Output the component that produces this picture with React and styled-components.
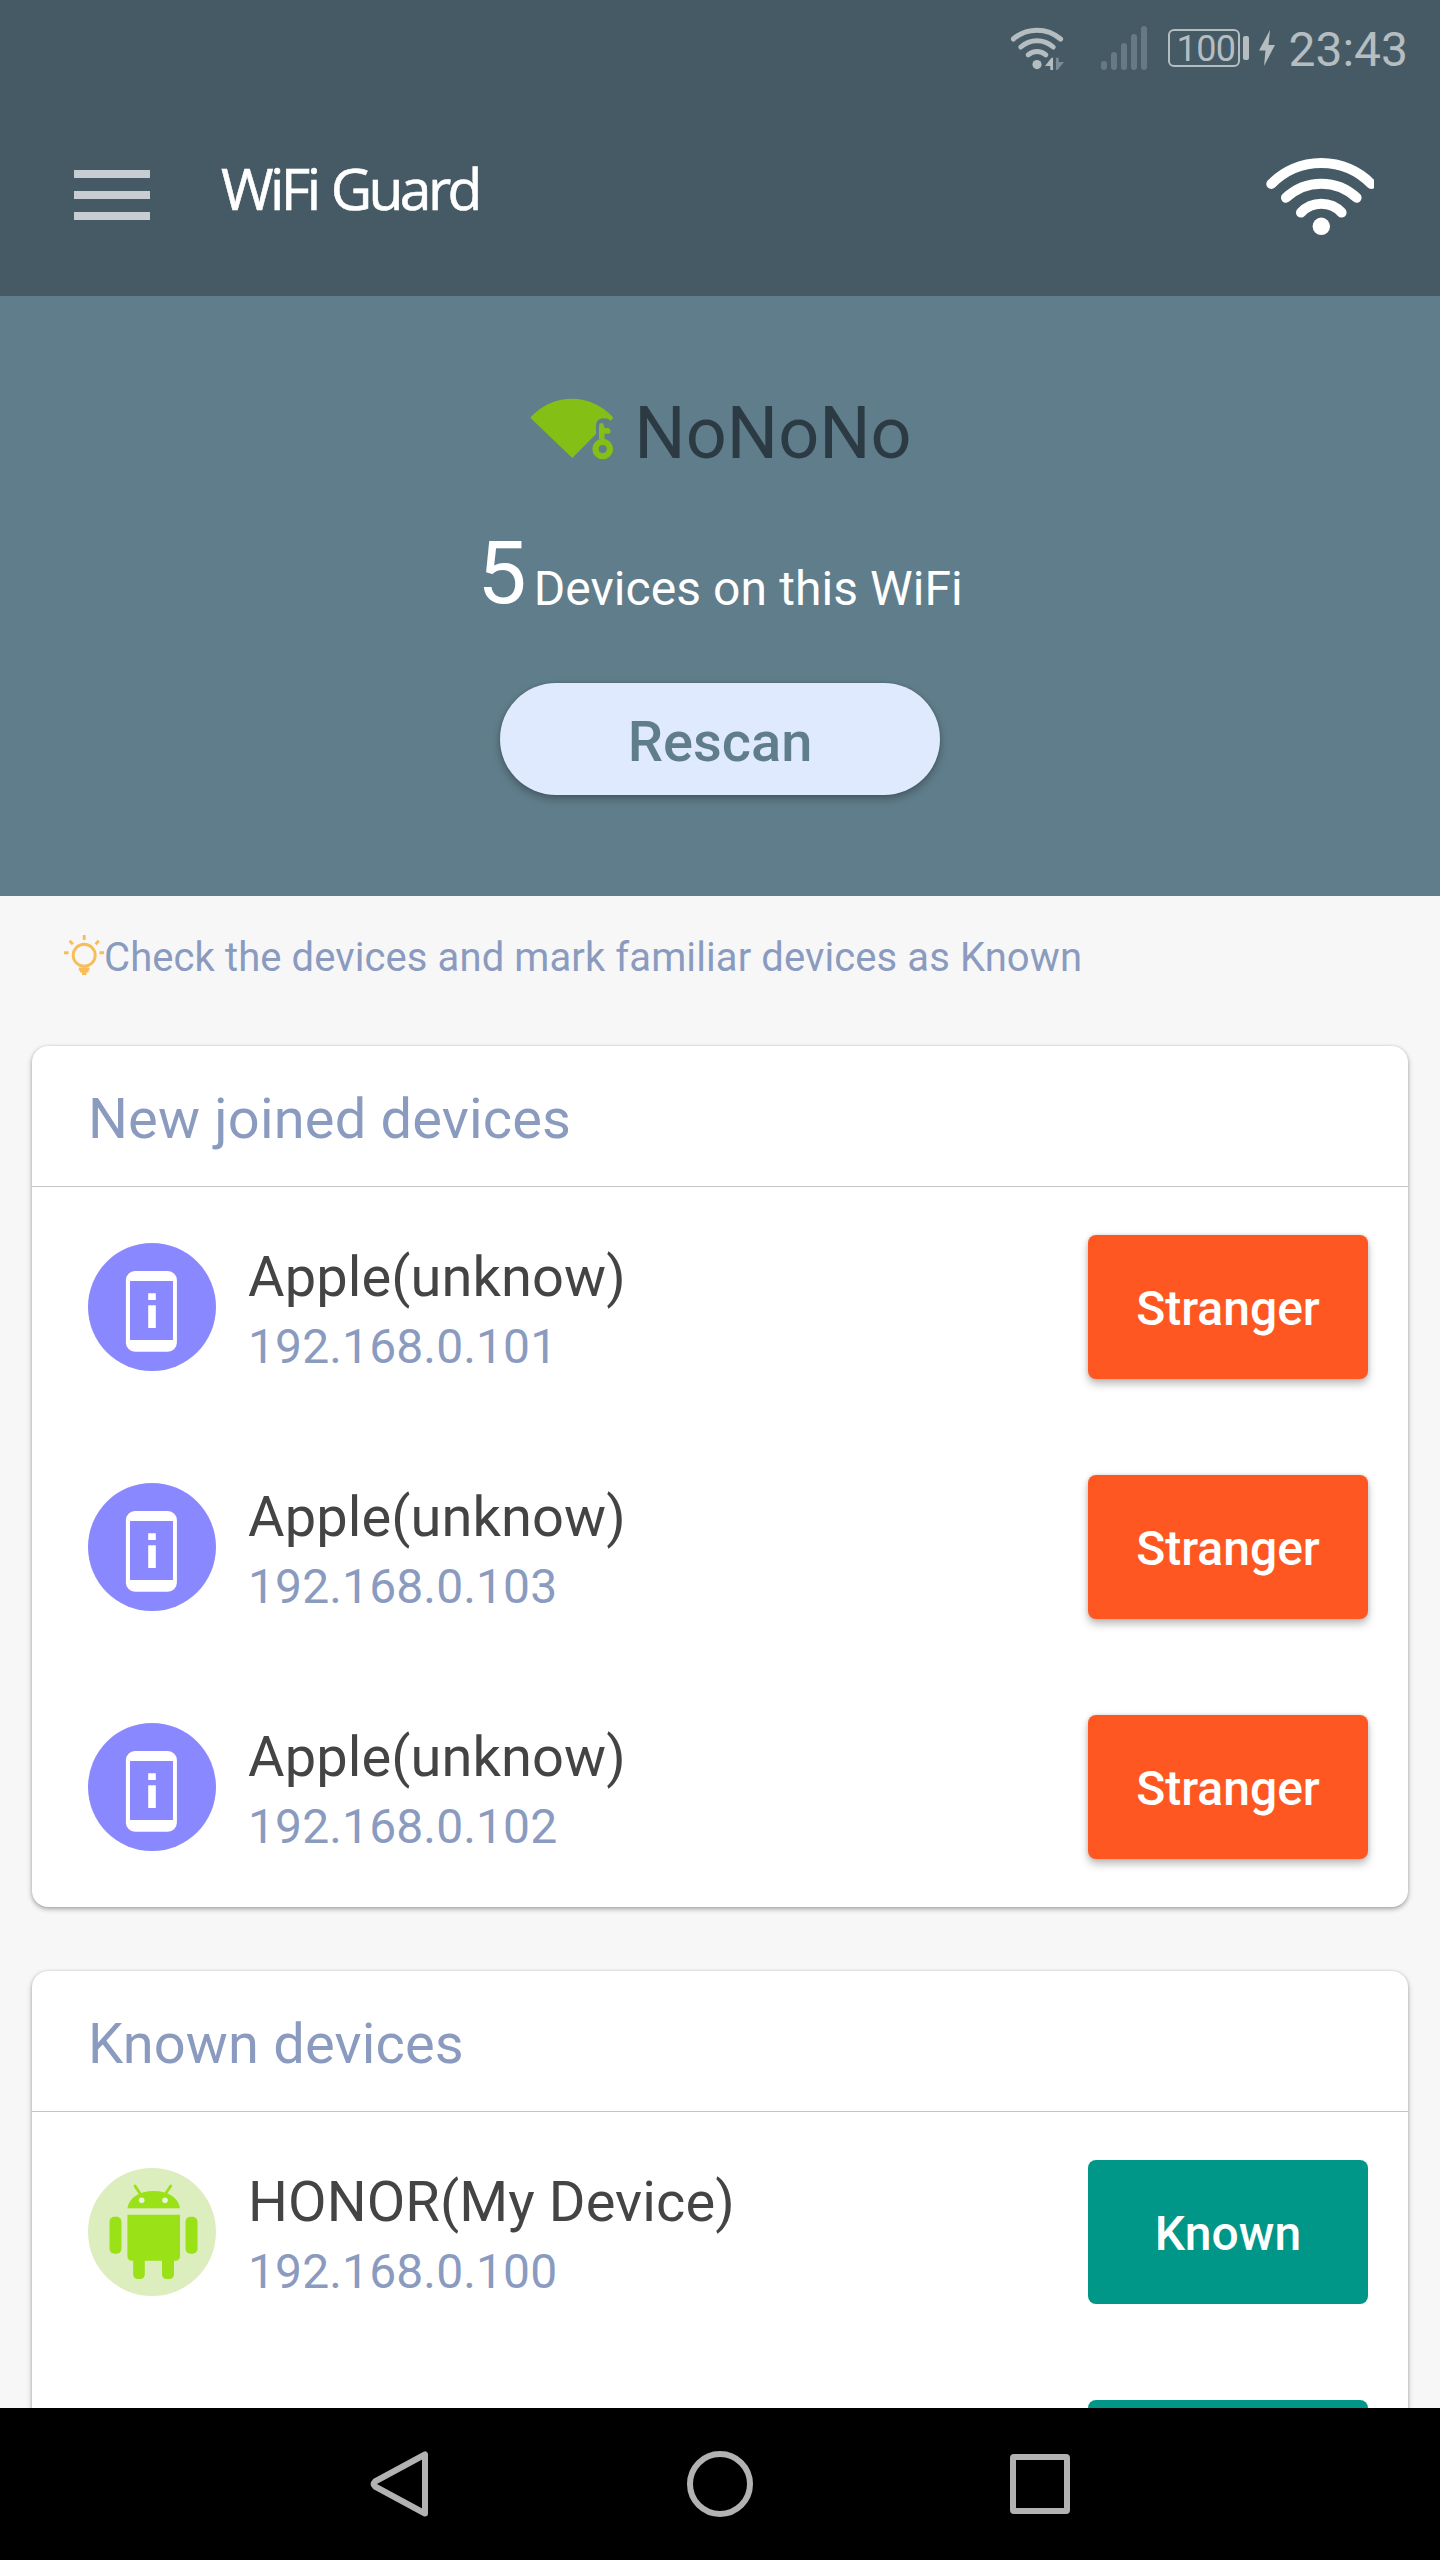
import styled, { createGlobalStyle, css } from 'styled-components';

const GlobalStyle = createGlobalStyle`
  * {
    box-sizing: border-box;
  }

  body {
    margin: 0;
    background: #f7f7f7;
    font-family: Roboto, 'Liberation Sans', sans-serif;
  }
`;

const Screen = styled.div`
  width: 1440px;
  height: 2560px;
  display: flex;
  flex-direction: column;
  overflow: hidden;
`;

// status bar

const StatusBar = styled.div`
  height: 96px;
  flex: none;
  display: flex;
  justify-content: flex-end;
  align-items: center;
  padding-right: 32px;
  background: #455a64;
  color: #b5bdc1;
`;

const SignalIcon = styled.svg`
  margin: 0 21px 0 37px;
`;

const Battery = styled.div`
  width: 72px;
  height: 38px;
  padding: 2px 0 0 3px;
  border: 2px solid #b5bdc1;
  border-radius: 6px;
  font-size: 36px;
  line-height: 32px;
  text-align: center;
  letter-spacing: -0.6px;
`;

const BatteryTip = styled.div`
  width: 6px;
  height: 24px;
  margin: 0 10px 0 3px;
  border-radius: 2px;
  background: #b5bdc1;
`;

const Clock = styled.div`
  margin-left: 13px;
  padding-top: 3px;
  font-size: 48px;
  line-height: 56px;
`;

// app bar

const AppBar = styled.header`
  height: 200px;
  flex: none;
  display: flex;
  align-items: flex-start;
  padding: 60px 66px 0 74px;
  background: #455a64;
`;

const MenuButton = styled.button`
  width: 76px;
  display: flex;
  flex-direction: column;
  gap: 13px;
  margin-top: 14px;
  padding: 0;
  border: 0;
  background: none;
`;

const MenuLine = styled.span`
  height: 8px;
  background: #c8ccd3;
`;

const AppTitle = styled.h1`
  flex: 1;
  margin: 0 0 0 71px;
  font-family: 'Open Sans', 'Noto Sans', sans-serif;
  font-size: 57px;
  font-weight: 400;
  line-height: 64px;
  letter-spacing: -3.6px;
  word-spacing: 2px;
  -webkit-text-stroke: 0.6px #fff;
  color: #fff;
`;

// network summary

const Summary = styled.section`
  height: 600px;
  flex: none;
  display: flex;
  flex-direction: column;
  align-items: center;
  padding-top: 96px;
  background: #607d8b;
`;

const Network = styled.div`
  height: 84px;
  display: flex;
  align-items: flex-start;
  gap: 20px;
  padding-left: 2px;
  font-size: 72px;
  line-height: 84px;
  color: #2c3a43;

  svg {
    margin-top: 6px;
  }
`;

const DeviceCount = styled.div`
  display: flex;
  align-items: flex-end;
  gap: 7px;
  margin-top: 53px;
  color: #fff;
`;

const Count = styled.span`
  font-size: 88px;
  line-height: 88px;
`;

const CountLabel = styled.span`
  margin-bottom: 4px;
  font-size: 48px;
  line-height: 48px;
  letter-spacing: 0.08px;
`;

const RescanButton = styled.button`
  width: 440px;
  height: 112px;
  margin-top: 66px;
  padding: 6px 0 0;
  border: 0;
  border-radius: 56px;
  background: #e0eaff;
  box-shadow: 0 4px 8px rgba(0, 0, 0, 0.28), 0 0 3px rgba(0, 0, 0, 0.14);
  font: 500 56px Roboto, sans-serif;
  color: #607d8b;
`;

// device lists

const Content = styled.main`
  flex: 1;
  min-height: 0;
  overflow: hidden;
  background: #f7f7f7;
`;

const Hint = styled.p`
  height: 150px;
  display: flex;
  align-items: flex-start;
  margin: 0;
  padding: 38px 64px 0;
  font-size: 40px;
  line-height: 48px;
  letter-spacing: 0.09px;
  color: #8a9bbf;

  svg {
    margin-top: 1px;
  }
`;

const Card = styled.section`
  margin: 0 32px 64px;
  border-radius: 16px;
  background: #fff;
  box-shadow: 0 2px 5px rgba(0, 0, 0, 0.34), 0 0 2px rgba(0, 0, 0, 0.12);
`;

const CardTitle = styled.h2`
  height: 141px;
  display: flex;
  align-items: center;
  margin: 0;
  padding: 6px 56px 0;
  border-bottom: 1px solid #c4c4c4;
  font-size: 56px;
  font-weight: 400;
  letter-spacing: 0.16px;
  color: #8a9bbf;
`;

const Row = styled.div`
  height: 240px;
  display: flex;
  align-items: center;
  padding: 0 40px 0 56px;
`;

const DeviceInfo = styled.div`
  flex: 1;
  display: flex;
  flex-direction: column;
  gap: 4px;
  margin-left: 32px;
  padding-top: 4px;
`;

const DeviceName = styled.div`
  font-size: 56px;
  line-height: 72px;
  letter-spacing: 0.1px;
  color: #444;
`;

const DeviceIp = styled.div`
  font-size: 48px;
  line-height: 60px;
  letter-spacing: 0.12px;
  color: #8a9bbf;
`;

const strangerStyles = css`
  background: #ff5722;
  box-shadow: 0 5px 9px rgba(0, 0, 0, 0.26), 0 0 4px rgba(0, 0, 0, 0.12);
`;

const StatusButton = styled.button`
  width: 280px;
  height: 144px;
  margin-left: auto;
  padding: 3px 0 0;
  border: 0;
  border-radius: 8px;
  background: #009688;
  font: 500 48px Roboto, sans-serif;
  color: #fff;
  ${({ $stranger }) => $stranger && strangerStyles}
`;

// navigation bar

const NavBar = styled.nav`
  height: 152px;
  flex: none;
  display: flex;
  justify-content: center;
  align-items: center;
  gap: 240px;
  background: #000;

  svg {
    fill: none;
    stroke: #b2b2b2;
    stroke-width: 6;
    stroke-linejoin: round;
  }
`;

const StatusWifiIcon = () => (
  <svg width="54" height="44" viewBox="0 0 54 44">
    <g fill="none" stroke="#b5bdc1" strokeWidth="5" strokeLinecap="round">
      <path d="M3.4 13A35.9 35.9 0 0 1 50.6 13" />
      <path d="M10.8 21A24.2 24.2 0 0 1 43.2 21" />
      <path d="M18.2 28.8A13.3 13.3 0 0 1 35.8 28.8" />
    </g>
    <circle cx="27" cy="38.6" r="4.6" fill="#b5bdc1" />
    <path d="M35 40l6.5-8.300h1.500V44h-2.700v-4z" fill="#b5bdc1" />
    <path d="M46 31.700h2.700V36H54l-6.500 8H46z" fill="#7d8c94" />
  </svg>
);

const Signal = () => (
  <SignalIcon width="46" height="44" viewBox="0 0 46 44" fill="#677982">
    <rect x="0" y="35" width="6" height="9" rx="3" />
    <rect x="10" y="26" width="6" height="18" rx="3" />
    <rect x="20" y="17" width="6" height="27" rx="3" />
    <rect x="30" y="8" width="6" height="36" rx="3" />
    <rect x="40" y="0" width="6" height="44" rx="3" />
  </SignalIcon>
);

const BoltIcon = () => (
  <svg width="16" height="36" viewBox="0 0 16 36" fill="#b5bdc1">
    <path d="M11 0L0 20.500h6.500L5 36l11-21H9.500z" />
  </svg>
);

const WifiIcon = () => (
  <svg width="108" height="80" viewBox="0 0 108 80">
    <g fill="none" stroke="#fff" strokeWidth="10" strokeLinecap="round">
      <path d="M5.300 28A70 70 0 0 1 105.300 28" />
      <path d="M20 41.700A51.500 51.500 0 0 1 90.600 41.700" />
      <path d="M35 56.500A28 28 0 0 1 75.600 56.500" />
    </g>
    <circle cx="55.300" cy="70.300" r="8.700" fill="#fff" />
  </svg>
);

const SecureWifiIcon = () => (
  <svg width="84" height="62" viewBox="0 0 84 62" fill="#84bf15">
    <path d="M.3 19.700A54.800 54.800 0 0 1 83.300 19.700L80.700 22.700Q78 20.200 73.500 20.300Q66 20.600 66 28V36L42.300 60z" />
    <path d="M69 41V28.500Q69 25 72 25Q73.500 25 74 28.500L75.500 30.500Q77 29.300 79 30.300Q81 31.500 80.500 34.500Q79.500 36.500 76.500 35.500L74.500 36V41z" />
    <circle cx="72.700" cy="51" r="7.200" fill="none" stroke="#84bf15" strokeWidth="6.300" />
  </svg>
);

const BulbIcon = () => (
  <svg width="40" height="40" viewBox="0 0 40 40" fill="none" stroke="#f8bd58" strokeWidth="2.900">
    <circle cx="20.200" cy="20.300" r="11" />
    <path d="M20.200 0v5M0 17.700h4.500M35.500 17.700H40M5.600 5.800l3.200 3.400M34.800 5.800l-3.200 3.400M14.800 34h10.700M16 36h8.400M18 39h4.500" />
  </svg>
);

const PhoneAvatar = () => (
  <svg width="128" height="128" viewBox="0 0 128 128">
    <circle cx="64" cy="64" r="64" fill="#8988ff" />
    <rect x="37.900" y="28" width="51" height="80.700" rx="9" fill="#fff" />
    <path d="M42 38h43v59H42z" fill="#8988ff" />
    <path d="M60.200 50.300h7.600v6.700h-7.600zM60.200 62.300h7.600V85h-7.600z" fill="#fff" />
  </svg>
);

const AndroidAvatar = () => (
  <svg width="128" height="128" viewBox="0 0 128 128" fill="#9be117">
    <circle cx="64" cy="64" r="64" fill="#dcedbe" />
    <path d="M47 18l6 9M82.700 18l-6 9" stroke="#9be117" strokeWidth="2.800" strokeLinecap="round" />
    <path d="M39.400 40.300C41 30 51 23 65.700 23S90.500 30 92 40.300z" />
    <circle cx="53.700" cy="32.300" r="2.800" fill="#eaf6d3" />
    <circle cx="77" cy="32.300" r="2.800" fill="#eaf6d3" />
    <path d="M39.400 46.700H92V88q0 4.700-4.700 4.700H44.100q-4.700 0-4.700-4.700z" />
    <rect x="21.500" y="48.700" width="12" height="37" rx="5" />
    <rect x="97.500" y="48.700" width="12" height="37" rx="5" />
    <rect x="45.200" y="84" width="11.600" height="27" rx="4.500" />
    <rect x="74" y="84" width="12" height="27" rx="4.500" />
  </svg>
);

const newDevices = [
  { name: 'Apple(unknow)', ip: '192.168.0.101' },
  { name: 'Apple(unknow)', ip: '192.168.0.103' },
  { name: 'Apple(unknow)', ip: '192.168.0.102' },
];

const App = () => (
  <>
    <GlobalStyle />
    <Screen>
      <StatusBar>
        <StatusWifiIcon />
        <Signal />
        <Battery>100</Battery>
        <BatteryTip />
        <BoltIcon />
        <Clock>23:43</Clock>
      </StatusBar>
      <AppBar>
        <MenuButton>
          <MenuLine />
          <MenuLine />
          <MenuLine />
        </MenuButton>
        <AppTitle>WiFi Guard</AppTitle>
        <WifiIcon />
      </AppBar>
      <Summary>
        <Network>
          <SecureWifiIcon />
          <span>NoNoNo</span>
        </Network>
        <DeviceCount>
          <Count>5</Count>
          <CountLabel>Devices on this WiFi</CountLabel>
        </DeviceCount>
        <RescanButton>Rescan</RescanButton>
      </Summary>
      <Content>
        <Hint>
          <BulbIcon />
          <span>Check the devices and mark familiar devices as Known</span>
        </Hint>
        <Card>
          <CardTitle>New joined devices</CardTitle>
          {newDevices.map(({ name, ip }) => (
            <Row key={ip}>
              <PhoneAvatar />
              <DeviceInfo>
                <DeviceName>{name}</DeviceName>
                <DeviceIp>{ip}</DeviceIp>
              </DeviceInfo>
              <StatusButton $stranger>Stranger</StatusButton>
            </Row>
          ))}
        </Card>
        <Card>
          <CardTitle>Known devices</CardTitle>
          <Row>
            <AndroidAvatar />
            <DeviceInfo>
              <DeviceName>HONOR(My Device)</DeviceName>
              <DeviceIp>192.168.0.100</DeviceIp>
            </DeviceInfo>
            <StatusButton>Known</StatusButton>
          </Row>
          {/* next row, only its top edge shows above the nav bar */}
          <Row>
            <StatusButton />
          </Row>
        </Card>
      </Content>
      <NavBar>
        <svg width="80" height="80" viewBox="0 0 80 80">
          <path d="M65 10.500v59L15 42.500Q12.500 40 15 37.500z" />
        </svg>
        <svg width="80" height="80" viewBox="0 0 80 80">
          <circle cx="40" cy="40" r="30" />
        </svg>
        <svg width="80" height="80" viewBox="0 0 80 80">
          <rect x="13" y="13" width="54" height="54" rx="1" />
        </svg>
      </NavBar>
    </Screen>
  </>
);

export default App;
